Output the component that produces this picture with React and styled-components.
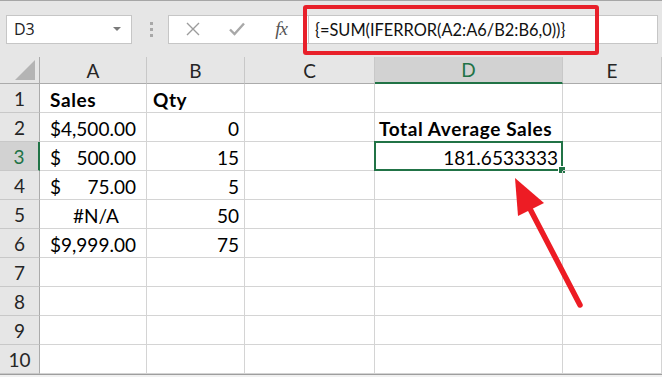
import React from "react";
import styled, { createGlobalStyle, css } from "styled-components";

const GlobalStyle = createGlobalStyle`
  * { box-sizing: border-box; }
  html, body { margin: 0; padding: 0; background: #ffffff; }
  body { font-family: "Lato", "Liberation Sans", sans-serif; }
`;

const Frame = styled.div`
  position: relative;
  width: 662px;
  height: 377px;
  overflow: hidden;
  background: #e6e6e6;
  border-top: 1px solid #a6a6a6;
`;

const Toolbar = styled.div`
  display: flex;
  align-items: center;
  height: 56px;
  padding: 0 4px 0 6px;
`;

const NameBox = styled.div`
  display: flex;
  align-items: center;
  justify-content: space-between;
  width: 126px;
  height: 29px;
  padding: 0 10px 0 7px;
  background: #ffffff;
  border: 1px solid #c6c6c6;
  font-family: "Open Sans", "Noto Sans", sans-serif;
  font-size: 16px;
  color: #222;
`;

const Caret = styled.span`
  width: 0;
  height: 0;
  border-left: 4px solid transparent;
  border-right: 4px solid transparent;
  border-top: 4px solid #7a7a7a;
`;

const Grip = styled.div`
  display: flex;
  flex-direction: column;
  gap: 3px;
  margin: 0 15px 0 18px;

  span {
    width: 3px;
    height: 3px;
    background: #a8a8a8;
  }
`;

const FormulaBar = styled.div`
  flex: 1;
  display: flex;
  align-items: center;
  height: 29px;
  padding-left: 2px;
  background: #ffffff;
  border: 1px solid #c6c6c6;
`;

const IconSlot = styled.div`
  display: flex;
  align-items: center;
  justify-content: center;
  width: 44px;
  height: 100%;
`;

const Fx = styled.span`
  font-family: "Liberation Serif", serif;
  font-style: italic;
  font-size: 19px;
  color: #555;
  letter-spacing: -1px;
`;

const FormulaText = styled.div`
  flex: 1;
  height: 100%;
  display: flex;
  align-items: center;
  margin-left: 5px;
  padding-left: 6px;
  border-left: 1px solid #c6c6c6;
  font-size: 16.4px;
  color: #111;
`;

const Sheet = styled.div`
  display: grid;
  grid-template-columns: 40px 107px 98px 130px 188px 99px;
  grid-template-rows: 27px repeat(10, 29px);
  background: #ffffff;
`;

const Corner = styled.div`
  position: relative;
  background: #e6e6e6;
  border-right: 1px solid #ababab;
  border-bottom: 1px solid #ababab;

  &::after {
    content: "";
    position: absolute;
    right: 4px;
    bottom: 3px;
    border-left: 20px solid transparent;
    border-bottom: 20px solid #b4b4b4;
  }
`;

const ColHeader = styled.div`
  display: flex;
  align-items: center;
  justify-content: center;
  background: #e6e6e6;
  border-right: 1px solid #c8c8c8;
  border-bottom: 1px solid #ababab;
  font-size: 19px;
  color: #262626;

  ${(p) =>
    p.$active &&
    css`
      background: #d2d2d2;
      color: #217346;
      border-bottom: 2px solid #217346;
    `}
`;

const RowHeader = styled.div`
  display: flex;
  align-items: center;
  justify-content: center;
  background: #e6e6e6;
  border-right: 1px solid #ababab;
  border-bottom: 1px solid #c8c8c8;
  font-size: 19px;
  color: #262626;

  ${(p) =>
    p.$active &&
    css`
      background: #d2d2d2;
      color: #217346;
      border-right: 2px solid #217346;
    `}
`;

const Cell = styled.div`
  position: relative;
  display: flex;
  align-items: center;
  justify-content: ${(p) => p.$align || "flex-start"};
  padding: 2px ${(p) => p.$pr ?? 4}px 0 ${(p) => p.$pl ?? 4}px;
  border-right: 1px solid #d4d4d4;
  border-bottom: 1px solid #d4d4d4;
  font-size: 19px;
  font-weight: ${(p) => (p.$bold ? 700 : 400)};
  letter-spacing: ${(p) => (p.$bold ? "0.6px" : "0")};
  color: #000;
  white-space: pre;

  ${(p) =>
    p.$selected &&
    css`
      &::before {
        content: "";
        position: absolute;
        inset: -1px -1px -1px -1px;
        border: 2px solid #217346;
      }
      &::after {
        content: "";
        position: absolute;
        right: -4px;
        bottom: -4px;
        width: 6px;
        height: 6px;
        background: #217346;
        border: 1px solid #ffffff;
      }
    `}
`;

const Money = styled.span`
  flex: 1;
  display: flex;
  justify-content: space-between;
`;

const BottomEdge = styled.div`
  height: 3px;
  border-top: 1px solid #9e9e9e;
  background: #f0f0f0;
`;

const Callout = styled.div`
  position: absolute;
  left: 303px;
  top: 4px;
  width: 296px;
  height: 50px;
  border: 4px solid #e8202a;
  border-radius: 3px;
  pointer-events: none;
`;

const Overlay = styled.svg`
  position: absolute;
  left: 0;
  top: 0;
  pointer-events: none;
`;

const columns = ["A", "B", "C", "D", "E"];

const rows = [
  { a: { text: "Sales", bold: true }, b: { text: "Qty", bold: true } },
  { a: { money: "$4,500.00", solid: true }, b: { text: "0" }, d: { text: "Total Average Sales", bold: true } },
  { a: { money: "500.00" }, b: { text: "15" }, d: { text: "181.6533333", selected: true } },
  { a: { money: "75.00" }, b: { text: "5" } },
  { a: { text: "#N/A", center: true }, b: { text: "50" } },
  { a: { money: "$9,999.00", solid: true }, b: { text: "75" } },
  {},
  {},
  {},
  {},
];

function ColumnA({ data }) {
  if (!data) return <Cell />;
  if (data.money && data.solid) {
    return <Cell $pl={10} $pr={10}>{data.money}</Cell>;
  }
  if (data.money) {
    return (
      <Cell $pl={10} $pr={10}>
        <Money>
          <span>$</span>
          <span>{data.money}</span>
        </Money>
      </Cell>
    );
  }
  return (
    <Cell $align={data.center ? "center" : "flex-start"} $bold={data.bold} $pl={10}>
      {data.text}
    </Cell>
  );
}

export default function App() {
  return (
    <>
      <GlobalStyle />
      <Frame>
        <Toolbar>
          <NameBox>
            D3
            <Caret />
          </NameBox>
          <Grip>
            <span />
            <span />
            <span />
          </Grip>
          <FormulaBar>
            <IconSlot>
              <svg width="14" height="14" viewBox="0 0 14 14">
                <path d="M1 1 L13 13 M13 1 L1 13" stroke="#9c9c9c" strokeWidth="1.4" fill="none" />
              </svg>
            </IconSlot>
            <IconSlot>
              <svg width="16" height="14" viewBox="0 0 16 14">
                <path d="M1 7.5 L5.5 12 L15 1.5" stroke="#a8a8a8" strokeWidth="2.4" fill="none" />
              </svg>
            </IconSlot>
            <IconSlot>
              <Fx>fx</Fx>
            </IconSlot>
            <FormulaText>{"{=SUM(IFERROR(A2:A6/B2:B6,0))}"}</FormulaText>
          </FormulaBar>
        </Toolbar>

        <Sheet>
          <Corner />
          {columns.map((c) => (
            <ColHeader key={c} $active={c === "D"}>
              {c}
            </ColHeader>
          ))}
          {rows.map((r, i) => (
            <React.Fragment key={i}>
              <RowHeader $active={i === 2}>{i + 1}</RowHeader>
              <ColumnA data={r.a} />
              {r.b ? (
                <Cell
                  $align={r.b.bold ? "flex-start" : "flex-end"}
                  $bold={r.b.bold}
                  $pl={6}
                  $pr={5}
                >
                  {r.b.text}
                </Cell>
              ) : (
                <Cell />
              )}
              <Cell />
              {r.d ? (
                <Cell
                  $align={r.d.bold ? "flex-start" : "flex-end"}
                  $bold={r.d.bold}
                  $selected={r.d.selected}
                >
                  {r.d.text}
                </Cell>
              ) : (
                <Cell />
              )}
              <Cell />
            </React.Fragment>
          ))}
        </Sheet>
        <BottomEdge />

        <Callout />
        <Overlay width="662" height="377" viewBox="0 0 662 377">
          <line x1="528" y1="204" x2="580" y2="304" stroke="#ed1c24" strokeWidth="5.5" strokeLinecap="round" />
          <polygon points="515,177 544,202 518,215" fill="#ed1c24" />
        </Overlay>
      </Frame>
    </>
  );
}
